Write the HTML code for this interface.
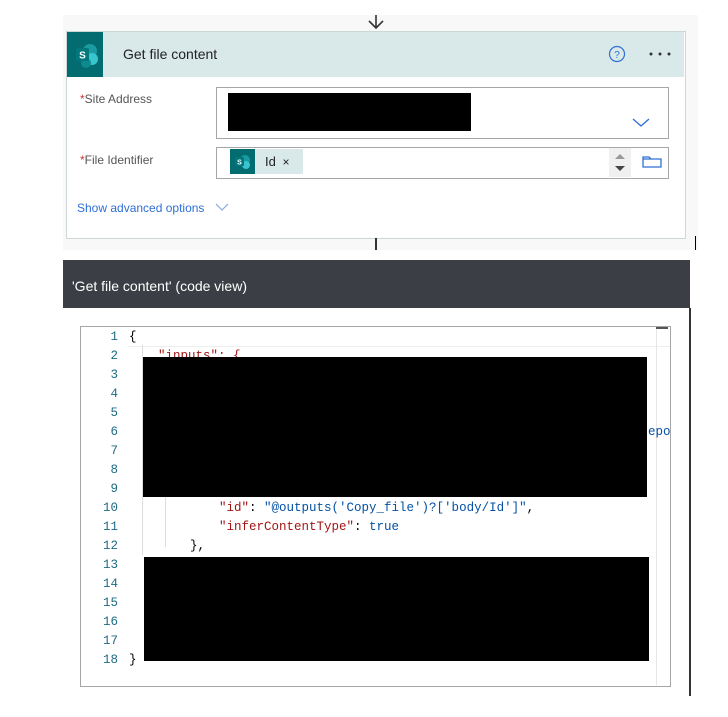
<!DOCTYPE html>
<html><head><style>
body{margin:0;width:728px;height:717px;background:#fff;position:relative;overflow:hidden;font-family:"Liberation Sans",sans-serif}
.a{position:absolute}
.mono{font-family:"Liberation Mono",monospace;font-size:12.5px}
.ln{position:absolute;left:94px;width:24px;text-align:right;color:#1d6b85;font-family:"Liberation Mono",monospace;font-size:12.5px}
</style></head><body>
<div class="a" style="left:63px;top:15px;width:635px;height:235px;background:#f8f8f8"></div>
<svg class="a" style="left:366px;top:14px" width="20" height="16"><path d="M10 1V14M3 7l7 7 7-7" stroke="#333" stroke-width="1.6" fill="none"/></svg>
<div class="a" style="left:66px;top:31px;width:618px;height:206px;background:#fff;border:1px solid #cfd6d8"></div>
<div class="a" style="left:67px;top:32px;width:617px;height:45px;background:#d9e8e9"></div>
<div class="a" style="left:67px;top:32px;width:36px;height:45px;background:#036c70"></div>
<svg class="a" style="left:73px;top:41px" width="28" height="28"><circle cx="17" cy="10" r="7" fill="#1a9ba1"/><circle cx="19" cy="18" r="6" fill="#37c6d0"/><circle cx="13" cy="22" r="5" fill="#0d8a8f"/><rect x="3" y="7" width="13" height="13" rx="1.5" fill="#03787c"/><text x="9.5" y="17.5" fill="#fff" font-size="10" font-weight="bold" text-anchor="middle" font-family="Liberation Sans">S</text></svg>
<div class="a" style="left:123px;top:46px;font-size:14px;color:#222">Get file content</div>
<svg class="a" style="left:608px;top:45px" width="18" height="18"><circle cx="9" cy="9" r="7.5" stroke="#2f6fd6" stroke-width="1.2" fill="none"/><text x="9" y="13" font-size="10" fill="#2f6fd6" text-anchor="middle">?</text></svg>
<svg class="a" style="left:648px;top:51px" width="24" height="6"><circle cx="3" cy="3" r="1.5" fill="#333"/><circle cx="12" cy="3" r="1.5" fill="#333"/><circle cx="21" cy="3" r="1.5" fill="#333"/></svg>
<div class="a" style="left:80px;top:92px;font-size:12px;color:#555"><span style="color:#c33">*</span>Site Address</div>
<div class="a" style="left:80px;top:153px;font-size:12px;color:#555"><span style="color:#c33">*</span>File Identifier</div>
<div class="a" style="left:216px;top:87px;width:451px;height:50px;border:1px solid #a6a6a6;background:#fff"></div>
<div class="a" style="left:228px;top:93px;width:243px;height:38px;background:#000"></div>
<svg class="a" style="left:632px;top:118px" width="18" height="10"><path d="M1 1l8 7 8-7" stroke="#2f6fd6" stroke-width="1.4" fill="none"/></svg>
<div class="a" style="left:216px;top:147px;width:451px;height:30px;border:1px solid #a6a6a6;background:#fff"></div>
<div class="a" style="left:230px;top:149px;width:73px;height:25px;background:#d9e8e9"></div>
<div class="a" style="left:230px;top:149px;width:25px;height:25px;background:#036c70"></div>
<svg class="a" style="left:233px;top:152px" width="20" height="20"><circle cx="12" cy="8" r="5" fill="#1a9ba1"/><circle cx="13" cy="13" r="4" fill="#37c6d0"/><rect x="2" y="5" width="9" height="9" rx="1" fill="#03787c"/><text x="6.5" y="12.5" fill="#fff" font-size="7" font-weight="bold" text-anchor="middle">S</text></svg>
<div class="a" style="left:265px;top:154px;font-size:13px;color:#222">Id <span style="font-size:12px;margin-left:3px">×</span></div>
<div class="a" style="left:609px;top:148px;width:22px;height:29px;background:#f0f0f0"></div>
<svg class="a" style="left:613px;top:152px" width="14" height="22"><path d="M2 7l5-5 5 5z" fill="#999"/><path d="M2 14l5 5 5-5z" fill="#444"/></svg>
<svg class="a" style="left:642px;top:154px" width="20" height="14"><path d="M1 3h6l2 2h10v8H1z M1 5h18" stroke="#2f6fd6" stroke-width="1.3" fill="none"/></svg>
<div class="a" style="left:77px;top:201px;font-size:12px;color:#2f6fd6">Show advanced options</div>
<svg class="a" style="left:215px;top:203px" width="14" height="9"><path d="M1 1l6 6 6-6" stroke="#8aa8e0" stroke-width="1.2" fill="none"/></svg>
<div class="a" style="left:375px;top:238px;width:2px;height:12px;background:#333"></div>
<div class="a" style="left:695px;top:236px;width:1px;height:14px;background:#000"></div>
<div class="a" style="left:63px;top:260px;width:627px;height:48px;background:#3b3f45"></div>
<div class="a" style="left:72px;top:278px;font-size:14px;color:#fff">'Get file content' (code view)</div>
<div class="a" style="left:689px;top:308px;width:2px;height:388px;background:#333"></div>
<div class="a" style="left:80px;top:326px;width:589px;height:359px;border:1px solid #a6a6a6;background:#fff"></div>
<div class="a" style="left:128px;top:328px;width:542px;height:18px;border-bottom:1px solid #eee"></div>
<div class="a" style="left:656px;top:327px;width:1px;height:358px;background:#e6e6e6"></div>
<div class="a" style="left:656px;top:327px;width:12px;height:2px;background:#555"></div>
<div class="a" style="left:142px;top:345px;width:1px;height:210px;background:#ddd"></div>
<div class="a" style="left:165px;top:497px;width:1px;height:50px;background:#ddd"></div>
<div class="ln" style="top:330px">1</div><div class="ln" style="top:349px">2</div><div class="ln" style="top:368px">3</div><div class="ln" style="top:387px">4</div><div class="ln" style="top:406px">5</div><div class="ln" style="top:425px">6</div><div class="ln" style="top:444px">7</div><div class="ln" style="top:463px">8</div><div class="ln" style="top:482px">9</div><div class="ln" style="top:501px">10</div><div class="ln" style="top:520px">11</div><div class="ln" style="top:539px">12</div><div class="ln" style="top:558px">13</div><div class="ln" style="top:577px">14</div><div class="ln" style="top:596px">15</div><div class="ln" style="top:615px">16</div><div class="ln" style="top:634px">17</div><div class="ln" style="top:653px">18</div>
<div class="a mono" style="left:129px;top:330px;color:#000">{</div>
<div class="a mono" style="left:158px;top:349px;color:#a31515">"inputs": {</div>
<div class="a mono" style="left:648px;top:425px;color:#0451a5">epo</div>
<div class="a mono" style="left:219px;top:501px;white-space:pre"><span style="color:#a31515">"id"</span>: <span style="color:#0451a5">"@outputs('Copy_file')?['body/Id']"</span>,</div>
<div class="a mono" style="left:219px;top:520px;white-space:pre"><span style="color:#a31515">"inferContentType"</span>: <span style="color:#0451a5">true</span></div>
<div class="a mono" style="left:190px;top:539px">},</div>
<div class="a mono" style="left:129px;top:653px">}</div>
<div class="a" style="left:143px;top:357px;width:504px;height:140px;background:#000"></div>
<div class="a" style="left:144px;top:557px;width:505px;height:104px;background:#000"></div>
</body></html>
